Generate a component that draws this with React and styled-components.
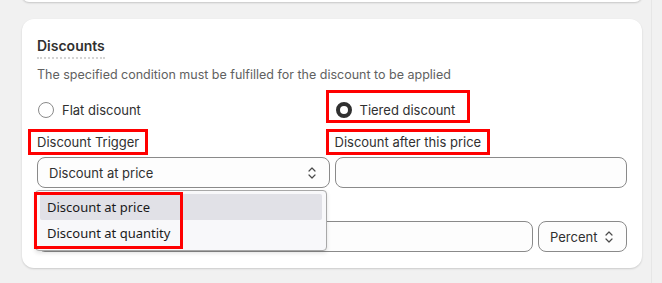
import React from "react";
import styled, { createGlobalStyle, css } from "styled-components";

const GlobalStyle = createGlobalStyle`
  html, body {
    margin: 0;
    padding: 0;
    background: #f1f1f1;
    font-family: Inter, "Noto Sans", sans-serif;
    color: #303030;
  }
`;

const Page = styled.div`
  width: 652px;
  height: 283px;
  box-sizing: border-box;
  border-right: 1px solid #e6e6e6;
  padding-left: 22px;
  overflow: hidden;
`;

const TopCard = styled.div`
  width: 620px;
  height: 14px;
  margin-top: -12px;
  background: #fff;
  border-radius: 12px;
  box-shadow: 0 1px 2px rgba(0, 0, 0, 0.18);
`;

const Card = styled.div`
  width: 620px;
  box-sizing: border-box;
  margin-top: 17px;
  background: #fff;
  border-radius: 12px;
  box-shadow: 0 1px 2px rgba(0, 0, 0, 0.16);
  padding: 16px 15px 16px;
`;

const Title = styled.h2`
  display: inline-block;
  margin: 0;
  font-size: 14px;
  font-weight: 600;
  line-height: 20px;
  color: #303030;
  border-bottom: 2px dotted #d4d4d4;
  padding-bottom: 1px;
`;

const Subtitle = styled.p`
  margin: 7px 0 0;
  font-size: 12.5px;
  line-height: 18px;
  color: #616161;
`;

const Grid = styled.div`
  display: grid;
  grid-template-columns: 1fr 1fr;
  column-gap: 5px;
  align-items: ${(p) => p.$align || "stretch"};
  margin-top: ${(p) => p.$top || 0}px;
`;

// red annotation frames from the screenshot
const RadioLabel = styled.label`
  display: inline-flex;
  align-items: center;
  gap: 8px;
  font-size: 13px;
  line-height: 20px;
  color: #303030;
  padding-left: 1px;
  justify-self: start;
  ${(p) =>
    p.$mark &&
    css`
      padding: 7px 12px 0 7px;
      margin-left: -6px;
      outline: 3px solid #f00;
    `}
`;

const RadioDot = styled.span`
  width: 16px;
  height: 16px;
  box-sizing: border-box;
  border-radius: 50%;
  background: #fff;
  border: ${(p) => (p.$checked ? "4.5px solid #303030" : "1px solid #8a8a8a")};
`;

const Field = styled.div`
  position: relative;
  display: flex;
  flex-direction: column;
`;

const FieldLabel = styled.span`
  align-self: flex-start;
  font-size: 13px;
  line-height: 16px;
  color: #303030;
  margin: 2px 0 7px;
  ${(p) =>
    p.$mark &&
    css`
      padding: 0 4px;
      margin-left: -4px;
      outline: 3px solid #f00;
      outline-offset: 2px;
    `}
`;

const LabelGap = styled.div`
  height: 25px;
`;

const SelectBox = styled.div`
  height: 31px;
  box-sizing: border-box;
  border: 1px solid #8a8a8a;
  border-radius: 8px;
  background: #fdfdfd;
  display: flex;
  align-items: center;
  justify-content: space-between;
  padding: 0 12px 0 11px;
  font-size: 13px;
  color: #303030;
  gap: 6px;
  ${(p) => p.$compact && "width: 89px; flex: none;"}
`;

const Input = styled.div`
  height: 31px;
  box-sizing: border-box;
  border: 1px solid #8a8a8a;
  border-radius: 8px;
  background: #fdfdfd;
  flex: 1 1 auto;
`;

const Row = styled.div`
  display: flex;
  gap: 5px;
`;

const Menu = styled.div`
  position: absolute;
  left: -2px;
  top: 58px;
  width: 292px;
  box-sizing: border-box;
  background: #f8f8fa;
  border: 1px solid #a8a8a8;
  border-radius: 4px;
  box-shadow: 0 2px 4px rgba(0, 0, 0, 0.12);
  padding: 3px 4px 4px;
  z-index: 5;
`;

const MenuList = styled.div`
  position: relative;
  display: flex;
  flex-direction: column;
  &::after {
    content: "";
    position: absolute;
    left: -6px;
    top: -2px;
    width: 149px;
    bottom: -3px;
    box-sizing: border-box;
    border: 3px solid #f00;
    pointer-events: none;
  }
`;

const MenuItem = styled.div`
  height: 26px;
  display: flex;
  align-items: center;
  padding-left: 7px;
  border-radius: 2px;
  font-family: "Noto Sans", sans-serif;
  font-size: 13px;
  color: #1a1a1a;
  background: ${(p) => (p.$active ? "#e1e1e7" : "transparent")};
`;

const Chevrons = () => (
  <svg width="10" height="14" viewBox="0 0 10 14" fill="none">
    <path d="M2 5l3-3 3 3M2 9l3 3 3-3" stroke="#4a4a4a" strokeWidth="1.2" strokeLinecap="round" strokeLinejoin="round" />
  </svg>
);

export default function App() {
  return (
    <>
      <GlobalStyle />
      <Page>
        <TopCard />
        <Card>
          <Title>Discounts</Title>
          <Subtitle>The specified condition must be fulfilled for the discount to be applied</Subtitle>

          <Grid $top={9} $align="end">
            <RadioLabel>
              <RadioDot />
              Flat discount
            </RadioLabel>
            <RadioLabel $mark>
              <RadioDot $checked />
              Tiered discount
            </RadioLabel>
          </Grid>

          <Grid $top={12}>
            <Field>
              <FieldLabel $mark>Discount Trigger</FieldLabel>
              <SelectBox>
                Discount at price
                <Chevrons />
              </SelectBox>
              <Menu>
                <MenuList>
                  <MenuItem $active>Discount at price</MenuItem>
                  <MenuItem>Discount at quantity</MenuItem>
                </MenuList>
              </Menu>
            </Field>
            <Field>
              <FieldLabel $mark>Discount after this price</FieldLabel>
              <Input />
            </Field>
          </Grid>

          <Field style={{ marginTop: 8 }}>
            <LabelGap />
            <Row>
              <Input />
              <SelectBox $compact>
                Percent
                <Chevrons />
              </SelectBox>
            </Row>
          </Field>
        </Card>
      </Page>
    </>
  );
}
